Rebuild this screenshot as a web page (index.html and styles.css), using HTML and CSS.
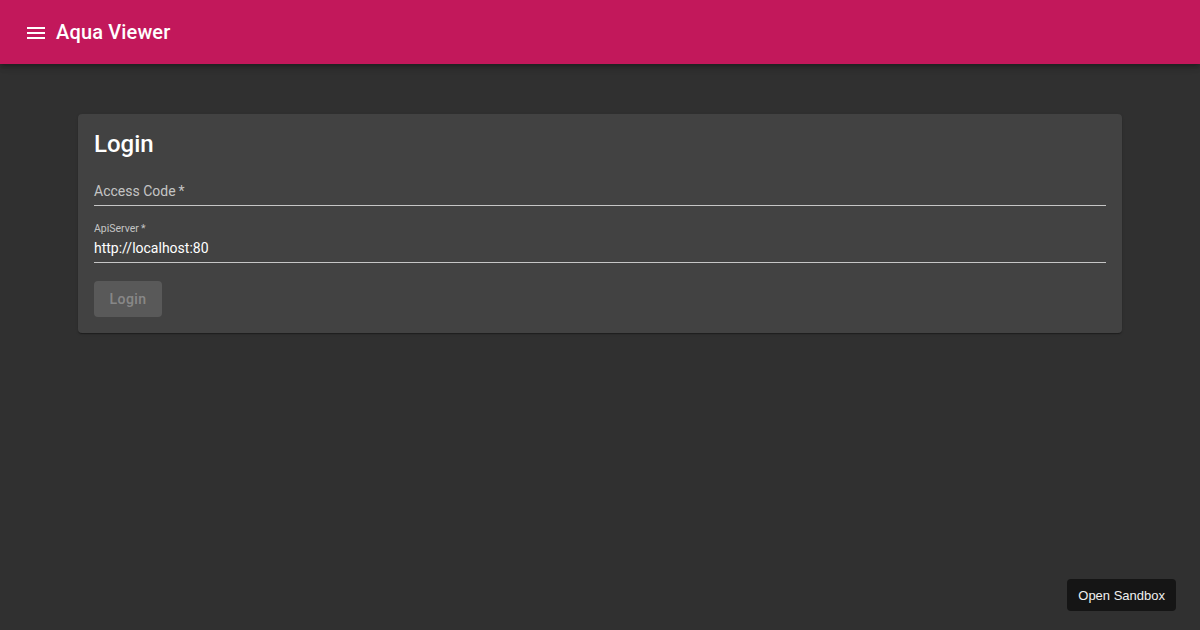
FILE: index.html
```html
<!DOCTYPE html>
<html lang="en">
<head>
    <meta charset="UTF-8">
    <meta name="viewport" content="width=device-width, initial-scale=1.0">
    <title>Aqua Viewer</title>
    <link rel="stylesheet" href="styles.css">
</head>
<body>
    <header class="app-bar">
        <button class="menu-btn" aria-label="menu">
            <svg viewBox="0 0 24 24" width="24" height="24"><path d="M3 18h18v-2H3v2zm0-5h18v-2H3v2zm0-7v2h18V6H3z" fill="currentColor"/></svg>
        </button>
        <h1 class="app-title">Aqua Viewer</h1>
    </header>

    <main class="content">
        <div class="card">
            <h2 class="card-title">Login</h2>
            <div class="field field--empty">
                <div class="field-input field-input--label">Access Code&thinsp;*</div>
            </div>
            <div class="field">
                <label class="field-label">ApiServer&thinsp;*</label>
                <div class="field-input">http://localhost:80</div>
            </div>
            <button class="login-btn" disabled>Login</button>
        </div>
    </main>

    <button class="sandbox-btn">Open Sandbox</button>
</body>
</html>
```

FILE: styles.css
```css
* {
    box-sizing: border-box;
}

body {
    font-family: Roboto, "Liberation Sans", sans-serif;
    background-color: #303030;
    color: #ffffff;
    margin: 0;
    padding: 0;
}

.app-bar {
    display: flex;
    align-items: center;
    height: 64px;
    padding: 0 24px;
    background-color: #c2185b;
    box-shadow: 0 2px 4px -1px rgba(0,0,0,0.2), 0 4px 5px 0 rgba(0,0,0,0.14), 0 1px 10px 0 rgba(0,0,0,0.12);
    position: relative;
    z-index: 1;
}

.menu-btn {
    display: flex;
    padding: 0;
    margin: 2px 8px 0 0;
    background: none;
    border: none;
    color: #ffffff;
}

.app-title {
    margin: 0;
    font-size: 20px;
    font-weight: 500;
    line-height: 32px;
    letter-spacing: 0.15px;
}

.content {
    padding: 50px 78px;
}

.card {
    display: flex;
    flex-direction: column;
    align-items: flex-start;
    padding: 16px;
    background-color: #424242;
    border-radius: 4px;
    box-shadow: 0 2px 1px -1px rgba(0,0,0,0.2), 0 1px 1px 0 rgba(0,0,0,0.14), 0 1px 3px 0 rgba(0,0,0,0.12);
}

.card-title {
    margin: -2px 0 3px;
    font-size: 24px;
    font-weight: 500;
    line-height: 32px;
}

.field {
    width: 100%;
    padding-bottom: 4px;
    border-bottom: 1px solid rgba(255,255,255,0.7);
    margin-bottom: 14px;
}

.field--empty {
    padding-top: 18px;
}

.field-label {
    display: block;
    font-size: 10.5px;
    line-height: 16px;
    margin: 1px 0;
    color: rgba(255,255,255,0.7);
}

.field-input {
    font-size: 14px;
    line-height: 20px;
}

.field-input--label {
    color: rgba(255,255,255,0.7);
}

.login-btn {
    margin-top: 4px;
    height: 36px;
    width: 68px;
    padding: 0;
    font-family: inherit;
    font-size: 14px;
    font-weight: 500;
    letter-spacing: 0.4px;
    border: none;
    border-radius: 4px;
    background-color: rgba(255,255,255,0.12);
    color: rgba(255,255,255,0.3);
}

.sandbox-btn {
    position: fixed;
    right: 24px;
    bottom: 19px;
    height: 32px;
    padding: 0 11px;
    font-family: "Liberation Sans", Arial, sans-serif;
    font-size: 13px;
    color: #f0f0f0;
    background-color: #151515;
    border: none;
    border-radius: 4px;
}
```
